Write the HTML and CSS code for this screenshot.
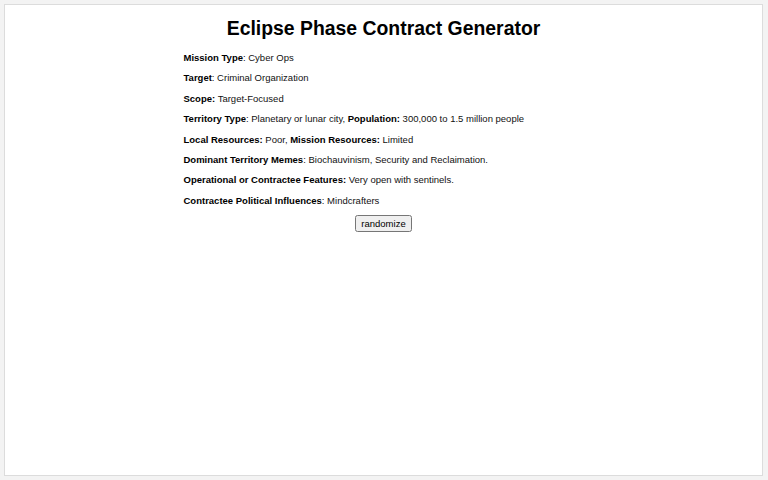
FILE: index.html
```html
<!DOCTYPE html>
<html>
<head>
<meta charset="utf-8">
<link rel="stylesheet" href="styles.css">
</head>
<body>
<div class="page">
  <h1 class="title">Eclipse Phase Contract Generator</h1>
  <div class="contract">
    <p><b>Mission Type</b>: Cyber Ops</p>
    <p><b>Target</b>: Criminal Organization</p>
    <p><b>Scope:</b> Target-Focused</p>
    <p><b>Territory Type</b>: Planetary or lunar city, <b>Population:</b> 300,000 to 1.5 million people</p>
    <p><b>Local Resources:</b> Poor, <b>Mission Resources:</b> Limited</p>
    <p><b>Dominant Territory Memes</b>: Biochauvinism, Security and Reclaimation.</p>
    <p><b>Operational or Contractee Features:</b> Very open with sentinels.</p>
    <p><b>Contractee Political Influences</b>: Mindcrafters</p>
  </div>
  <div class="actions"><button class="btn">randomize</button></div>
</div>
</body>
</html>
```
FILE: styles.css
```css
html, body { margin: 0; padding: 0; }
body {
  background: #f3f3f3;
  padding: 4px;
  height: 480px;
  box-sizing: border-box;
  font-family: "Liberation Sans", Arial, sans-serif;
}
.page {
  background: #fff;
  border: 1px solid #dcdcdc;
  height: 100%;
  box-sizing: border-box;
  width: 759px;
}
.title {
  font-size: 19.4px;
  font-weight: bold;
  text-align: center;
  margin: 12px 0 8px;
  color: #000;
}
.contract {
  width: 400px;
  margin: 0 auto;
  font-size: 9.5px;
  color: #111;
}
.contract p {
  margin: 0;
  line-height: 12px;
  padding: 4px 0 4.4px;
}
.contract b { font-weight: bold; color: #000; }
.actions {
  text-align: center;
  margin-top: 2px;
}
.btn {
  font-family: "Liberation Sans", Arial, sans-serif;
  font-size: 9.5px;
  padding: 1px 4px;
}
```
